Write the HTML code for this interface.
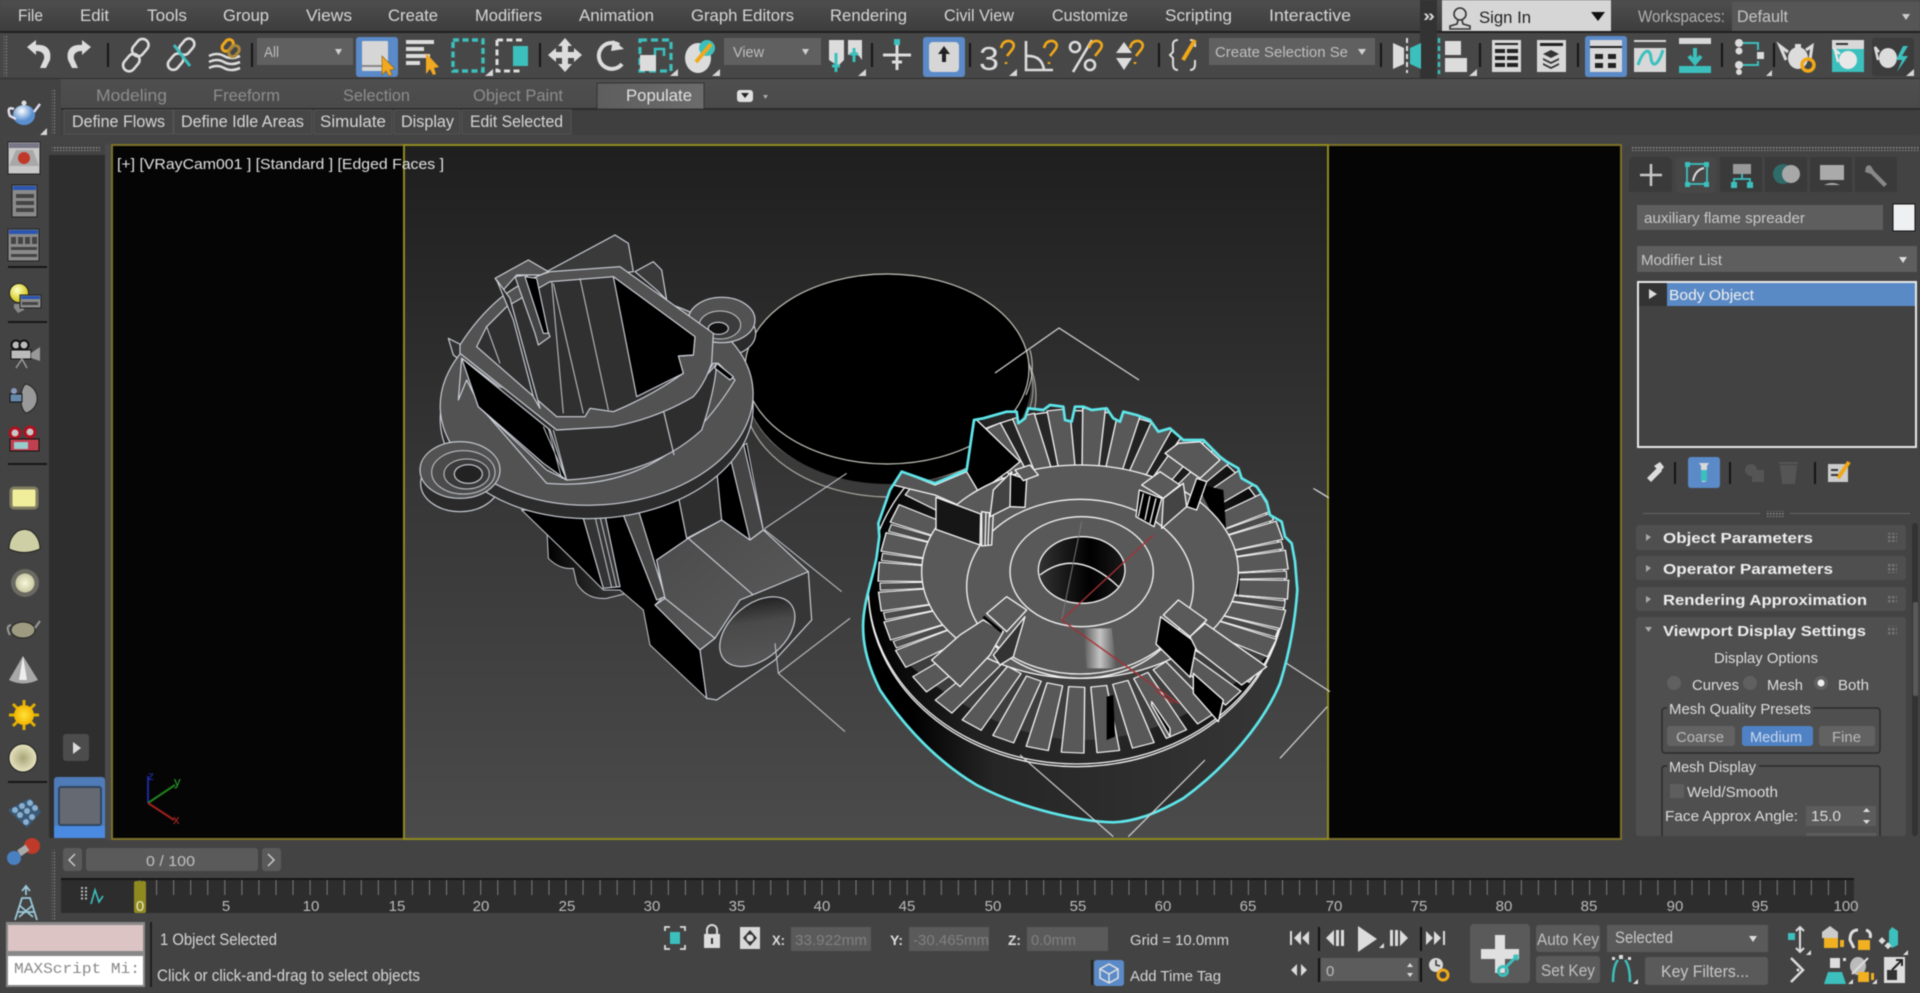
<!DOCTYPE html>
<html><head><meta charset="utf-8"><title>3ds Max</title>
<style>
html,body{margin:0;padding:0;background:#434343;width:1920px;height:993px;overflow:hidden}
svg{display:block;filter:blur(.4px)}
text{font-family:"Liberation Sans",sans-serif;font-size:16.5px;fill:#d6d6d6}
.g{fill:#8d8d8d}
.b{font-weight:bold;fill:#eee;font-size:15px}
.p{font-size:14.5px;fill:#ddd}
.w{fill:#dcdcdc}
.t{fill:#3cc0bd}
.sep{stroke:#151515;stroke-width:2}
.wr{stroke:#cdd1d9;stroke-width:3.4;stroke-linejoin:round}
.wf{stroke:#c4c7cd;stroke-width:3}
.ws{stroke:#f4f4f4;stroke-width:4;stroke-linejoin:round}
.nf{fill:none}
</style></head><body>
<svg width="1920" height="993" viewBox="0 0 1920 993" xmlns="http://www.w3.org/2000/svg">
<defs>
<linearGradient id="vp" x1="0" y1="0" x2="0" y2="1"><stop offset="0" stop-color="#1f1f1f"/><stop offset=".5" stop-color="#373737"/><stop offset="1" stop-color="#4b4b4b"/></linearGradient>
<linearGradient id="mb" x1="0" y1="0" x2="0" y2="1"><stop offset="0" stop-color="#4e4e4e"/><stop offset="1" stop-color="#3d3d3d"/></linearGradient>
<linearGradient id="tb" x1="0" y1="0" x2="0" y2="1"><stop offset="0" stop-color="#4f4f4f"/><stop offset="1" stop-color="#4a4a4a"/></linearGradient>
<linearGradient id="pop" x1="0" y1="0" x2="1" y2="0"><stop offset="0" stop-color="#5e5e5e"/><stop offset="1" stop-color="#6c6c6c"/></linearGradient>
<linearGradient id="base" gradientUnits="userSpaceOnUse" x1="60" y1="0" x2="1300" y2="0"><stop offset="0" stop-color="#000"/><stop offset=".1" stop-color="#000"/><stop offset=".3" stop-color="#262626"/><stop offset="1" stop-color="#363636"/></linearGradient>
<linearGradient id="intr" gradientUnits="userSpaceOnUse" x1="60" y1="0" x2="1300" y2="0"><stop offset="0" stop-color="#000"/><stop offset=".25" stop-color="#202020"/><stop offset=".55" stop-color="#2a2a2a"/><stop offset=".85" stop-color="#141414"/><stop offset="1" stop-color="#000"/></linearGradient>
<linearGradient id="hole" x1="0" y1="0" x2="1" y2="0"><stop offset="0" stop-color="#333"/><stop offset=".6" stop-color="#000"/><stop offset="1" stop-color="#1a1a1a"/></linearGradient>
<linearGradient id="hi" x1="0" y1="0" x2="1" y2="0"><stop offset="0" stop-color="#585858"/><stop offset=".5" stop-color="#c4c4c4"/><stop offset="1" stop-color="#585858"/></linearGradient>
<linearGradient id="bore" x1="0" y1="1" x2="1" y2="0"><stop offset="0" stop-color="#5a5a5a"/><stop offset=".6" stop-color="#4a4a4a"/><stop offset="1" stop-color="#0c0c0c"/></linearGradient>
<linearGradient id="stub" x1="0" y1="0" x2="1" y2="0"><stop offset="0" stop-color="#000"/><stop offset=".5" stop-color="#222"/><stop offset="1" stop-color="#3a3a3a"/></linearGradient>
<linearGradient id="blk" x1="0" y1="0" x2="1" y2="1"><stop offset="0" stop-color="#4a4a4a"/><stop offset="1" stop-color="#5c5c5c"/></linearGradient>
<radialGradient id="sun"><stop offset="0" stop-color="#ffe23a"/><stop offset="1" stop-color="#f2b400"/></radialGradient>
<radialGradient id="bulb" cx=".4" cy=".35"><stop offset="0" stop-color="#ffffc8"/><stop offset="1" stop-color="#d8d030"/></radialGradient>
<radialGradient id="pale"><stop offset="0" stop-color="#f8f8d8"/><stop offset="1" stop-color="#c8c8a4"/></radialGradient>
<radialGradient id="ball2"><stop offset="0" stop-color="#a8a478"/><stop offset="1" stop-color="#e8e4c0"/></radialGradient>
<radialGradient id="tp" cx=".4" cy=".3"><stop offset="0" stop-color="#fff"/><stop offset="1" stop-color="#5a90d0"/></radialGradient>
<pattern id="tick" width="17.06" height="40" patternUnits="userSpaceOnUse" x="139" y="880"><rect x="0" y="0" width="1" height="15" fill="#7c7c7c"/></pattern>
<pattern id="dots" width="3" height="3" patternUnits="userSpaceOnUse"><rect width="1.5" height="1.5" fill="#8c8c8c"/></pattern>
<pattern id="grip" width="4" height="4" patternUnits="userSpaceOnUse"><rect width="2.4" height="2.4" fill="#777"/></pattern>
<polygon id="tooth" points="-24,-380 24,-380 34,-615 -34,-615" fill="#585858" stroke="#f4f4f4" stroke-width="4" stroke-linejoin="round"/>
<polygon id="tooth2" points="-9,-380 9,-380 13,-610 -13,-610" fill="#4a4a4a" stroke="#f4f4f4" stroke-width="3.500" stroke-linejoin="round"/>
<clipPath id="burn"><path d="M155,245 L255,280 350,240 372,90 400,85 470,65 500,65 505,100 525,85 535,55 580,60 600,45 640,50 645,90 665,95 675,50 700,50 725,60 770,55 790,85 810,95 820,65 860,75 900,90 925,125 960,115 1000,150 1060,150 1110,200 1130,215 1165,235 1175,265 1220,290 1250,335 1260,375 1295,395 1305,440 1325,460 1335,515 1342,600 C1335,700 1315,800 1290,880 C1240,1000 1130,1130 1000,1225 C930,1265 860,1295 790,1297 C700,1295 520,1260 380,1185 C270,1120 170,1020 90,900 C60,840 35,770 40,690 C45,620 70,560 80,500 L88,440 85,400 120,300Z"/></clipPath>
</defs>

<!-- base -->
<rect width="1920" height="993" fill="#434343"/>
<!-- menu bar -->
<rect width="1920" height="31" fill="url(#mb)"/>
<rect y="31" width="1920" height="2" fill="#202020"/>
<text x="18" y="21" textLength="25" lengthAdjust="spacingAndGlyphs">File</text>
<text x="80" y="21" textLength="29" lengthAdjust="spacingAndGlyphs">Edit</text>
<text x="147" y="21" textLength="40" lengthAdjust="spacingAndGlyphs">Tools</text>
<text x="223" y="21" textLength="46" lengthAdjust="spacingAndGlyphs">Group</text>
<text x="306" y="21" textLength="46" lengthAdjust="spacingAndGlyphs">Views</text>
<text x="388" y="21" textLength="50" lengthAdjust="spacingAndGlyphs">Create</text>
<text x="475" y="21" textLength="67" lengthAdjust="spacingAndGlyphs">Modifiers</text>
<text x="579" y="21" textLength="75" lengthAdjust="spacingAndGlyphs">Animation</text>
<text x="691" y="21" textLength="103" lengthAdjust="spacingAndGlyphs">Graph Editors</text>
<text x="830" y="21" textLength="77" lengthAdjust="spacingAndGlyphs">Rendering</text>
<text x="944" y="21" textLength="70" lengthAdjust="spacingAndGlyphs">Civil View</text>
<text x="1052" y="21" textLength="76" lengthAdjust="spacingAndGlyphs">Customize</text>
<text x="1165" y="21" textLength="67" lengthAdjust="spacingAndGlyphs">Scripting</text>
<text x="1269" y="21" textLength="82" lengthAdjust="spacingAndGlyphs">Interactive</text>
<rect x="1420" y="0" width="17" height="78" fill="#333"/>
<text x="1423" y="21" style="font-weight:bold" textLength="12" lengthAdjust="spacingAndGlyphs">»</text>
<rect x="1442" y="0" width="169" height="31" fill="#d6d6d6"/>
<circle cx="1460" cy="14" r="6" fill="none" stroke="#333" stroke-width="1.6"/><path d="M1458,20 L1457,24 1450,26 1450,29 1470,29 1470,26 1463,24 1462,20" fill="none" stroke="#333" stroke-width="1.6"/>
<text x="1479" y="23" textLength="52" lengthAdjust="spacingAndGlyphs" style="fill:#222">Sign In</text>
<path d="M1591,12 L1605,12 1598,21Z" fill="#111"/>
<text x="1638" y="22" textLength="87" lengthAdjust="spacingAndGlyphs" style="fill:#b0b0b0">Workspaces:</text>
<rect x="1732" y="2" width="188" height="29" fill="#565656"/>
<text x="1737" y="22" textLength="51" lengthAdjust="spacingAndGlyphs" style="fill:#c4c4c4">Default</text>
<path d="M1902,14 L1910,14 1906,20Z" fill="#ccc"/>

<!-- main toolbar -->
<rect y="33" width="1420" height="45" fill="#474747"/><rect x="1437" y="33" width="483" height="45" fill="#474747"/>
<rect y="78" width="1920" height="1" fill="#2e2e2e"/>
<rect x="4" y="36" width="3" height="40" fill="url(#dots)"/>
<!-- undo/redo -->
<path d="M27,47 L36,40 36,45 C47,44 52,50 50,60 L46,68 40,68 44,59 C45,54 42,51 36,51 L36,55Z" class="w"/>
<path d="M91,47 L82,40 82,45 C71,44 66,50 68,60 L72,68 78,68 74,59 C73,54 76,51 82,51 L82,55Z" class="w"/>
<line x1="108" y1="43" x2="108" y2="67" class="sep"/>
<!-- link -->
<g fill="none" stroke="#dcdcdc" stroke-width="2.600"><rect x="125" y="53" width="12" height="19" rx="6" transform="rotate(40 131 63)"/><rect x="134" y="38" width="12" height="19" rx="6" transform="rotate(40 140 48)"/>
<rect x="170" y="53" width="11" height="18" rx="5.500" transform="rotate(40 176 62)"/><rect x="181" y="38" width="11" height="18" rx="5.500" transform="rotate(40 187 47)"/></g>
<path d="M174,45 L190,66" stroke="#3cc0bd" stroke-width="3"/>
<!-- bind -->
<g fill="none" stroke="#dcdcdc" stroke-width="2.600"><path d="M209,56 Q217,52 224,56 T240,56"/><path d="M209,62 Q217,58 224,62 T240,62"/><path d="M209,68 Q217,64 224,68 T240,68"/></g>
<g fill="none" stroke="#f0a818" stroke-width="3"><rect x="224" y="39" width="8" height="13" rx="4" transform="rotate(40 228 45)"/><rect x="230" y="45" width="8" height="12" rx="4" transform="rotate(40 234 51)" stroke="#aa8838"/></g>
<line x1="252" y1="43" x2="252" y2="67" class="sep"/>
<!-- selection filter -->
<rect x="257" y="38" width="96" height="27" fill="#606060"/>
<text x="264" y="57" textLength="15" lengthAdjust="spacingAndGlyphs" style="fill:#bfbfbf;font-size:15px">All</text>
<path d="M335,49 L342,49 338.500,55Z" fill="#d0d0d0"/>
<rect x="356" y="37" width="42" height="40" rx="3" fill="#5a8ac8"/>
<rect x="362" y="41" width="26" height="30" rx="1" fill="#d6d6d6"/><rect x="362" y="65" width="26" height="2" fill="#888"/>
<path d="M382,56 L382,75 386,71 389,76 392,75 390,70 395,69Z" fill="#f2a820" stroke="#8a5a10" stroke-width=".6"/>
<!-- by name -->
<g class="w"><rect x="406" y="40" width="28" height="4"/><rect x="406" y="47" width="18" height="4"/><rect x="406" y="54" width="24" height="4"/><rect x="406" y="61" width="14" height="4"/></g>
<path d="M426,53 L426,74 430,69 433,75 436,74 434,68 439,67Z" fill="#f2a820"/>
<!-- region -->
<rect x="453" y="40" width="30" height="31" fill="none" stroke="#3cc0bd" stroke-width="3.400" stroke-dasharray="6 3.500"/>
<path d="M485,76 L493,76 493,69Z" fill="#d8d8d8"/>
<path d="M497,40 L522,40 M497,40 L497,71 522,71" fill="none" stroke="#dcdcdc" stroke-width="3" stroke-dasharray="6 3.500"/>
<rect x="513" y="46" width="15" height="20" class="t"/>
<line x1="540" y1="43" x2="540" y2="67" class="sep"/>
<!-- move -->
<path d="M565,38 L572,46 568,46 568,52 574,52 574,48 582,55 574,62 574,58 568,58 568,64 572,64 565,72 558,64 562,64 562,58 556,58 556,62 548,55 556,48 556,52 562,52 562,46 558,46Z" class="w"/>
<!-- rotate -->
<path d="M619,45 A13,13 0 1 0 622,64" fill="none" stroke="#dcdcdc" stroke-width="4"/><path d="M613,40 L624,49 611,51Z" class="w"/>
<!-- scale -->
<rect x="640" y="40" width="31" height="31" fill="none" stroke="#3cc0bd" stroke-width="3.200" stroke-dasharray="7 4"/>
<rect x="640" y="55" width="16" height="16" class="w"/><path d="M655,55 L655,49 664,49 664,56" fill="none" stroke="#3cc0bd" stroke-width="2.500"/>
<!-- placement -->
<ellipse cx="698" cy="58" rx="13" ry="15" class="w"/><circle cx="707" cy="48" r="8" class="t"/><path d="M696,62 L711,44" stroke="#f0a818" stroke-width="4"/>
<path d="M670,76 L678,76 678,69Z M712,76 L720,76 720,69Z" fill="#d8d8d8"/>
<!-- view -->
<rect x="724" y="38" width="97" height="27" fill="#606060"/>
<text x="733" y="57" textLength="31" lengthAdjust="spacingAndGlyphs" style="fill:#bfbfbf;font-size:15px">View</text>
<path d="M802,49 L809,49 805.500,55Z" fill="#d0d0d0"/>
<!-- pivot -->
<path d="M829,40 L844,40 844,60 838,66 829,60Z M848,40 L862,40 862,60 856,52 848,55Z" class="w"/>
<path d="M836,53 L836,72 M832,66 L840,66 M854,48 L854,62 M850,54 L858,54" stroke="#3cc0bd" stroke-width="3"/>
<path d="M858,76 L866,76 866,69Z" fill="#d8d8d8"/>
<line x1="872" y1="43" x2="872" y2="67" class="sep"/>
<!-- manipulate -->
<path d="M897,40 L897,70 M883,55 L911,55 M892,62 L902,62" stroke="#dcdcdc" stroke-width="3"/><rect x="894" y="39" width="6" height="6" class="t"/>
<rect x="923" y="37" width="42" height="40" rx="3" fill="#5a8ac8"/>
<rect x="929" y="42" width="30" height="30" rx="4" fill="#d6d6d6"/><path d="M944,46 L950,54 946,54 946,62 942,62 942,54 938,54Z" fill="#222"/>
<line x1="970" y1="43" x2="970" y2="67" class="sep"/>
<!-- snaps -->
<text x="979" y="70" style="font-size:33px;fill:#dcdcdc" textLength="20" lengthAdjust="spacingAndGlyphs">3</text>
<path d="M1001,48 Q1003,40 1010,41 Q1017,44 1011,51 L1007,56 M1006,62 L1006,64" fill="none" stroke="#f0a818" stroke-width="2.600"/>
<path d="M1009,76 L1017,76 1017,69Z" fill="#d8d8d8"/>
<path d="M1026,41 L1026,70 1053,70 M1026,70 L1026,56 Q1042,55 1044,70" fill="none" stroke="#dcdcdc" stroke-width="2.600"/>
<path d="M1044,48 Q1046,40 1053,41 Q1060,44 1054,51 L1050,56 M1049,62 L1049,64" fill="none" stroke="#f0a818" stroke-width="2.600"/>
<circle cx="1075" cy="47" r="5" fill="none" stroke="#dcdcdc" stroke-width="2.600"/><circle cx="1090" cy="65" r="5" fill="none" stroke="#dcdcdc" stroke-width="2.600"/><path d="M1073,72 L1092,40" stroke="#dcdcdc" stroke-width="2.600"/>
<path d="M1089,48 Q1091,40 1098,41 Q1105,44 1099,51 L1095,56" fill="none" stroke="#f0a818" stroke-width="2.600"/>
<path d="M1116,53 L1124,42 1132,53Z M1116,58 L1132,58 1124,70Z" class="w"/>
<path d="M1130,48 Q1132,40 1139,41 Q1146,44 1140,51 L1136,56 M1135,62 L1135,64" fill="none" stroke="#f0a818" stroke-width="2.600"/>
<line x1="1159" y1="43" x2="1159" y2="67" class="sep"/>
<path d="M1178,40 Q1172,40 1173,47 L1173,52 1170,55 1173,58 1173,64 Q1173,70 1178,70 M1190,40 Q1196,40 1195,47 M1195,60 L1195,64 Q1195,70 1190,70" fill="none" stroke="#dcdcdc" stroke-width="2"/>
<path d="M1183,60 L1195,40" stroke="#f0a818" stroke-width="4"/>
<rect x="1209" y="38" width="166" height="27" fill="#606060"/>
<text x="1215" y="57" textLength="133" lengthAdjust="spacingAndGlyphs" style="fill:#bfbfbf;font-size:15px">Create Selection Se</text>
<path d="M1358,49 L1366,49 1362,55Z" fill="#d0d0d0"/>
<line x1="1381" y1="43" x2="1381" y2="67" class="sep"/>
<!-- mirror -->
<path d="M1393,43 L1404,48 1404,64 1393,69Z" class="w"/><path d="M1421,43 L1410,48 1410,64 1421,69Z" class="t"/><line x1="1407" y1="38" x2="1407" y2="73" stroke="#ddd" stroke-width="2" stroke-dasharray="5 3"/>
<!-- align -->
<line x1="1439" y1="38" x2="1439" y2="74" stroke="#3cc0bd" stroke-width="2.500" stroke-dasharray="5 3"/><rect x="1445" y="41" width="16" height="14" class="w"/><rect x="1445" y="58" width="22" height="14" class="w"/>
<path d="M1469,76 L1477,76 1477,69Z" fill="#d8d8d8"/>
<line x1="1480" y1="43" x2="1480" y2="67" class="sep"/>
<!-- layers -->
<rect x="1492" y="40" width="29" height="32" fill="#d8d8d8"/><g fill="#222"><rect x="1495" y="43" width="23" height="2"/><rect x="1495" y="49" width="10" height="4"/><rect x="1507" y="49" width="11" height="4"/><rect x="1495" y="56" width="10" height="4"/><rect x="1507" y="56" width="11" height="4"/><rect x="1495" y="63" width="10" height="4"/><rect x="1507" y="63" width="11" height="4"/></g>
<rect x="1537" y="40" width="29" height="32" fill="#d8d8d8"/><rect x="1540" y="43" width="23" height="3" fill="#222"/><path d="M1551,50 L1559,54 1551,58 1543,54Z M1543,58 L1551,62 1559,58 1559,60 1551,64 1543,60Z M1543,63 L1551,67 1559,63 1559,65 1551,69 1543,65Z" fill="#333"/>
<line x1="1578" y1="43" x2="1578" y2="67" class="sep"/>
<!-- curve buttons -->
<rect x="1585" y="36" width="42" height="41" rx="3" fill="#5a8ac8"/>
<rect x="1590" y="40" width="32" height="32" fill="#d8d8d8"/><rect x="1590" y="46" width="32" height="2" fill="#222"/><rect x="1595" y="54" width="8" height="5" fill="#222"/><rect x="1608" y="54" width="8" height="5" fill="#222"/><rect x="1595" y="63" width="8" height="5" fill="#222"/><rect x="1608" y="63" width="8" height="5" fill="#222"/>
<rect x="1634" y="40" width="32" height="32" fill="#d8d8d8"/><rect x="1634" y="40" width="32" height="8" fill="#4a4a4a"/><rect x="1634" y="40" width="32" height="2" fill="#d8d8d8"/><path d="M1638,65 C1644,48 1650,48 1651,58 C1652,68 1658,66 1663,50" fill="none" stroke="#3cc0bd" stroke-width="3"/>
<rect x="1679" y="38" width="32" height="6" fill="#d8d8d8"/><rect x="1679" y="66" width="32" height="7" class="t"/><path d="M1695,48 L1695,62 M1689,56 L1695,63 1701,56" fill="none" stroke="#3cc0bd" stroke-width="4"/>
<line x1="1722" y1="43" x2="1722" y2="67" class="sep"/>
<g fill="#dcdcdc"><circle cx="1739" cy="43" r="4"/><circle cx="1739" cy="51" r="3.500"/><circle cx="1739" cy="65" r="4"/><circle cx="1739" cy="72" r="3"/><rect x="1757" y="52" width="7" height="7"/></g>
<path d="M1743,43 L1758,43 1758,50 M1743,65 L1758,65 1758,61" fill="none" stroke="#3cc0bd" stroke-width="2"/>
<path d="M1766,76 L1772,76 1772,70Z" fill="#d8d8d8"/>
<line x1="1774" y1="43" x2="1774" y2="67" class="sep"/>
<!-- render -->
<ellipse cx="1798" cy="58" rx="10" ry="11" fill="#dcdcdc"/><path d="M1788,52 L1780,46 1786,60 M1806,50 L1812,46 1810,60" fill="none" stroke="#dcdcdc" stroke-width="3"/><rect x="1795" y="44" width="6" height="4" fill="#dcdcdc"/><circle cx="1808" cy="65" r="6" fill="none" stroke="#f0a818" stroke-width="3.500"/>
<rect x="1832" y="40" width="32" height="32" class="t"/><rect x="1832" y="40" width="32" height="9" fill="#d8d8d8"/><rect x="1836" y="43" width="12" height="2" fill="#333"/><ellipse cx="1848" cy="60" rx="9" ry="9" fill="#e8e8e8"/><path d="M1840,54 L1835,50 1838,62" fill="none" stroke="#e8e8e8" stroke-width="2.500"/>
<rect x="1872" y="38" width="42" height="38" rx="3" fill="#3c3c3c"/><ellipse cx="1888" cy="58" rx="9" ry="10" fill="#dcdcdc"/><path d="M1879,52 L1875,47 1878,60" fill="none" stroke="#dcdcdc" stroke-width="2.500"/><path d="M1903,46 L1896,60 1902,60 1897,72 1908,56 1902,56 1908,46Z" class="t"/>
<path d="M1906,76 L1914,76 1914,69Z" fill="#d8d8d8"/>

<!-- ribbon -->
<rect x="0" y="79" width="61" height="56" fill="#434343"/>
<rect x="61" y="79" width="1859" height="29" fill="url(#tb)"/>
<rect x="61" y="108" width="1859" height="2" fill="#2c2c2c"/>
<rect x="61" y="110" width="1859" height="25" fill="#3f3f3f"/>
<rect y="135" width="1920" height="9" fill="#444"/>
<rect x="52" y="90" width="3" height="44" fill="url(#dots)"/>
<rect x="597" y="83" width="107" height="26" fill="url(#pop)" stroke="#333"/>
<text class="g" x="96" y="101" textLength="71" lengthAdjust="spacingAndGlyphs">Modeling</text>
<text class="g" x="213" y="101" textLength="67" lengthAdjust="spacingAndGlyphs">Freeform</text>
<text class="g" x="343" y="101" textLength="67" lengthAdjust="spacingAndGlyphs">Selection</text>
<text class="g" x="473" y="101" textLength="90" lengthAdjust="spacingAndGlyphs">Object Paint</text>
<text x="626" y="101" textLength="66" lengthAdjust="spacingAndGlyphs" style="fill:#e0e0e0">Populate</text>
<rect x="737" y="90" width="16" height="12" rx="3" fill="#e0e0e0"/><path d="M741,93 L749,93 745,98Z" fill="#222"/><path d="M763,95 L768,95 765.500,99Z" fill="#aaa"/>
<g fill="#464646" stroke="#535353"><rect x="64" y="110" width="109" height="24"/><rect x="174" y="110" width="138" height="24"/><rect x="314" y="110" width="78" height="24"/><rect x="394" y="110" width="66" height="24"/><rect x="462" y="110" width="109" height="24"/></g>
<text x="72" y="127" textLength="93" lengthAdjust="spacingAndGlyphs">Define Flows</text>
<text x="181" y="127" textLength="123" lengthAdjust="spacingAndGlyphs">Define Idle Areas</text>
<text x="320" y="127" textLength="66" lengthAdjust="spacingAndGlyphs">Simulate</text>
<text x="401" y="127" textLength="53" lengthAdjust="spacingAndGlyphs">Display</text>
<text x="470" y="127" textLength="93" lengthAdjust="spacingAndGlyphs">Edit Selected</text>

<!-- left strip -->
<rect x="49" y="155" width="56" height="683" fill="#2e2e2e"/>
<rect x="52" y="146" width="48" height="5" fill="url(#dots)"/>
<rect x="105" y="144" width="6" height="696" fill="#4a4a4a"/>
<!-- strip icons -->
<ellipse cx="24" cy="115" rx="11" ry="10" fill="url(#tp)"/><path d="M14,109 Q6,106 10,116 L16,119 M34,112 L40,104" fill="none" stroke="#dde" stroke-width="2.500"/><circle cx="24" cy="103" r="2.500" fill="#ddd"/>
<path d="M40,135 L47,135 47,128Z" fill="#d8d8d8"/>
<rect x="8" y="142" width="32" height="32" fill="#c8c8c8" stroke="#222"/><rect x="9" y="143" width="30" height="5" fill="#778"/><path d="M9,166 L16,150 33,150 39,166Z" fill="#a8a8a8"/><circle cx="24" cy="158" r="6" fill="#c03828"/>
<rect x="12" y="185" width="25" height="32" fill="#8a8a8a" stroke="#222"/><rect x="13" y="186" width="23" height="4" fill="#2a56b0"/><g fill="#444"><rect x="16" y="194" width="18" height="4"/><rect x="16" y="201" width="18" height="4"/><rect x="16" y="208" width="18" height="4"/></g>
<rect x="8" y="229" width="31" height="32" fill="#8a8a8a" stroke="#222"/><rect x="9" y="230" width="29" height="4" fill="#2a56b0"/><g fill="#444"><rect x="11" y="237" width="5" height="7"/><rect x="18" y="237" width="5" height="7"/><rect x="25" y="237" width="5" height="7"/><rect x="32" y="237" width="5" height="7"/><rect x="11" y="247" width="26" height="3"/><rect x="11" y="254" width="26" height="3"/></g>
<rect x="8" y="266" width="39" height="2" fill="#161616"/>
<circle cx="19" cy="293" r="9.500" fill="url(#bulb)" stroke="#222"/><path d="M14,304 L24,304 24,310 18,313 14,308Z" fill="#888"/><rect x="20" y="295" width="21" height="13" fill="#8a8a8a" stroke="#222"/><rect x="21" y="296" width="19" height="3" fill="#2a56b0"/><rect x="22" y="302" width="16" height="3" fill="#444"/>
<rect x="8" y="321" width="39" height="2" fill="#161616"/>
<circle cx="16" cy="345" r="4.500" fill="#bbb" stroke="#111" stroke-width="2"/><circle cx="24" cy="345" r="4.500" fill="#bbb" stroke="#111" stroke-width="2"/><rect x="11" y="350" width="20" height="9" fill="#bbb" stroke="#111"/><path d="M31,353 L40,347 40,361 31,358Z" fill="#999"/><path d="M16,368 L22,359 27,368" fill="none" stroke="#999" stroke-width="1.500"/>
<path d="M26,384 A15,15 0 0 1 26,413 A7,15 0 0 1 26,384Z" fill="#999" stroke="#222"/><rect x="10" y="394" width="12" height="8" fill="#68a" stroke="#111"/><circle cx="14" cy="391" r="3" fill="#89b"/>
<circle cx="15" cy="433" r="5" fill="#c8c8c8" stroke="#b01020" stroke-width="3"/><circle cx="30" cy="432" r="5" fill="#c8c8c8" stroke="#b01020" stroke-width="3"/><rect x="10" y="439" width="29" height="12" fill="#c04050" stroke="#111"/><rect x="14" y="442" width="14" height="7" fill="#9cc"/>
<rect x="8" y="463" width="39" height="2" fill="#161616"/>
<rect x="11" y="488" width="26" height="20" rx="3" fill="#f0ee9a" stroke="#807f62" stroke-width="3"/>
<path d="M9,549 A15,19 0 0 1 40,549 Q24,556 9,549Z" fill="#cfcfa6" stroke="#222"/>
<circle cx="25" cy="583" r="14" fill="#6a6a62"/><circle cx="25" cy="583" r="9.500" fill="url(#pale)"/>
<ellipse cx="23" cy="630" rx="12" ry="8" fill="#9d9a80" stroke="#222"/><path d="M11,625 Q5,626 10,635 M35,628 L40,621" fill="none" stroke="#999" stroke-width="2"/>
<path d="M23,656 L38,680 Q23,687 9,680Z" fill="#a8a8a8"/><path d="M23,656 L27,680 19,680Z" fill="#eee"/>
<g stroke="#e0b000" stroke-width="3"><path d="M24,700 L24,730 M9,715 L39,715 M13,704 L35,726 M35,704 L13,726"/></g><circle cx="24" cy="715" r="10" fill="url(#sun)"/>
<circle cx="23" cy="758" r="14" fill="url(#ball2)" stroke="#222"/>
<rect x="8" y="781" width="39" height="2" fill="#161616"/>
<path d="M8,810 L30,798 41,812 27,828Z" fill="#3a5a78"/><g fill="#8ab0d0"><circle cx="15" cy="810" r="3"/><circle cx="22" cy="806" r="3"/><circle cx="30" cy="803" r="3"/><circle cx="20" cy="815" r="3"/><circle cx="27" cy="811" r="3"/><circle cx="35" cy="808" r="3"/><circle cx="26" cy="822" r="3"/><circle cx="32" cy="817" r="3"/></g>
<circle cx="14" cy="858" r="7" fill="#4a80c0"/><circle cx="32" cy="846" r="8" fill="#c03a2a"/><rect x="18" y="847" width="10" height="7" fill="#aaa" transform="rotate(-35 23 850)"/>
<path d="M26,887 L26,895 M22,891 L26,886 30,891 M15,920 L22,898 30,898 37,920 M17,912 L35,912 M19,905 L33,917 M33,905 L19,917" fill="none" stroke="#9cc8d8" stroke-width="1.800"/>
<!-- side panel btns -->
<rect x="63" y="734" width="26" height="27" rx="3" fill="#4c4c4c"/><path d="M73,742 L81,748 73,754Z" fill="#ddd"/>
<rect x="54" y="777" width="51" height="61" rx="3" fill="#4f7cb8"/><rect x="54" y="826" width="51" height="12" fill="#4a8ae0"/><rect x="59" y="787" width="42" height="38" rx="2" fill="#656a72" stroke="#30465e" stroke-width="2"/>

<!-- viewport -->
<rect x="111" y="144" width="1511" height="696" fill="#050505"/>
<rect x="404" y="146" width="924" height="692" fill="url(#vp)"/>
<rect x="112" y="145" width="1509" height="694" fill="none" stroke="#7c7028" stroke-width="2"/>
<rect x="404" y="145" width="924" height="694" fill="none" stroke="#8f8a20" stroke-width="2"/>
<text x="117" y="169" textLength="327" lengthAdjust="spacingAndGlyphs" style="font-size:15px;fill:#e0e0e0">[+] [VRayCam001 ] [Standard ] [Edged Faces ]</text>

<!-- tripod -->
<g stroke-width="2" fill="none"><path d="M148,803 L148,776" stroke="#1a2a9a"/><path d="M148,803 L175,785" stroke="#208020"/><path d="M148,803 L174,820" stroke="#a02020"/></g>
<text x="148" y="780" style="font-size:12px;fill:#2030b0">z</text><text x="174" y="786" style="font-size:13px;fill:#30a030">y</text><text x="173" y="824" style="font-size:13px;fill:#b02828">x</text>

<!-- lid -->
<ellipse cx="890" cy="395" rx="146" ry="102" fill="#3a3a3a" stroke="#a8a8a0" stroke-width="1.200"/>
<ellipse cx="890" cy="388" rx="143" ry="95" fill="none" stroke="#a8a8a0" stroke-width="1"/>
<ellipse cx="888" cy="382" rx="143" ry="102" fill="#000"/>
<ellipse cx="887" cy="369" rx="142" ry="95" fill="#000" stroke="#c4c4bc" stroke-width="1.200"/>
<path d="M1030,350 Q1036,372 1026,395" fill="none" stroke="#ccc" stroke-width="1"/>
<g fill="none" stroke="#d4d4d4" stroke-width="1.200">
<path d="M995,373 L1059,328 1139,380"/><path d="M1316,490 L1329,498"/>
</g>

<!-- left object, coordinates from 3x crop -->
<g transform="translate(400 230) scale(.33333)">
<path d="M440,880 L445,985 Q480,1020 520,1015 L530,1060 Q560,1110 620,1105 L680,1090 L640,880Z" fill="url(#stub)" class="wf"/>
<path d="M365,840 L520,990 610,1080 660,1080 730,1140 750,1245 920,1405 900,1260 765,1125 790,1100 770,990 865,925 965,870 1050,930 1090,900 1040,640 880,740 670,850Z" fill="#000" class="wf"/>
<path d="M550,865 L610,1075 660,1070 615,855Z" fill="#333" class="wr"/>
<path d="M585,860 L635,1072 M600,860 L650,1072" class="wf nf"/>
<path d="M670,855 L770,1110 795,1100 715,840Z" fill="#474747" class="wr"/>
<path d="M835,800 L860,925 965,870 950,720 880,740Z" fill="#2e2e2e" class="wr"/>
<path d="M990,680 L1050,930 1090,900 1030,640Z" fill="#444" class="wr"/>
<path d="M1095,895 L1100,1010" class="wf nf"/>
<!-- block -->
<path d="M770,990 L865,925 965,870 1050,930 1090,900 1225,1025 1175,1060 1130,1075 1060,1100 945,1225 900,1260 765,1125 795,1105Z" fill="url(#blk)" class="wr"/>
<path d="M865,925 L1060,1095 M765,1125 L795,1105 945,1225" class="wr nf"/>
<path d="M900,1260 L945,1225 1020,1110 1130,1065 1225,1025 1235,1170 1125,1290 950,1410 920,1405Z" fill="#363636" class="wr"/>
<ellipse cx="1072" cy="1205" rx="130" ry="82" transform="rotate(-40 1072 1205)" fill="url(#bore)" class="wr"/>
<path d="M1125,1240 L1135,1330 1335,1505 M1135,1330 L1350,1165 M1095,900 L1325,1085 M1095,895 L1340,730" class="wf nf"/>
<!-- back fins -->
<path d="M440,125 L645,15 685,40 700,125 500,150Z" fill="#3a3a3a" class="wr"/>
<path d="M705,125 L760,95 785,120 800,210 770,180Z" fill="#3a3a3a" class="wr"/>
<path d="M145,325 L185,345 180,390 160,375Z" fill="#333" class="wr"/>
<!-- lobes lower -->
<ellipse cx="180" cy="760" rx="118" ry="85" fill="#2a2a2a" class="wr"/>
<ellipse cx="965" cy="310" rx="102" ry="70" fill="#2a2a2a" class="wr"/>
<ellipse cx="590" cy="550" rx="470" ry="315" transform="rotate(-4 590 550)" fill="#2c2c2c" class="wr"/>
<ellipse cx="590" cy="510" rx="470" ry="315" transform="rotate(-4 590 510)" fill="#525252" class="wr"/>
<ellipse cx="180" cy="720" rx="120" ry="85" fill="#525252" class="wr"/>
<ellipse cx="190" cy="727" rx="95" ry="65" fill="#4a4a4a" class="wf"/>
<ellipse cx="200" cy="732" rx="68" ry="45" fill="#3a3a3a" class="wf"/>
<ellipse cx="205" cy="732" rx="42" ry="28" fill="#222" class="wr"/>
<ellipse cx="965" cy="270" rx="100" ry="68" fill="#525252" class="wr"/>
<ellipse cx="960" cy="285" rx="62" ry="42" fill="#3c3c3c" class="wf"/>
<ellipse cx="955" cy="295" rx="30" ry="18" fill="#111" class="wr"/>
<!-- flange inner -->
<path d="M175,510 L200,450 240,530 440,760 Q800,790 1005,450 L955,400 940,400 880,500 640,590 470,600 185,385Z" fill="#505050" class="wr"/>
<path d="M205,440 L235,530 440,720 500,750 Q760,735 905,600 945,480 950,400 880,500 640,590 470,600Z" fill="#2e2e2e" class="wr"/>
<path d="M185,385 L235,530 430,700 500,750 450,600Z" fill="#000" class="wr"/>
<path d="M430,590 L500,750 M445,595 L485,745 M460,600 L500,750" class="wf nf"/>
<path d="M790,540 L822,675" class="wr nf"/>
<path d="M950,400 L1000,440 990,450 945,415Z" fill="#000" class="wr"/>
<!-- cup rim -->
<path d="M180,345 Q230,265 300,205 Q370,150 450,125 L660,110 940,310 935,400 Q915,460 880,500 Q770,565 640,590 L470,600 180,370Z" fill="#525252" class="wr"/>
<path d="M230,350 L260,290 320,230 450,155 640,140 885,320 880,375 835,378 850,430 Q750,500 640,545 L570,535 555,560 470,560Z" fill="#303030" class="wr"/>
<path d="M640,140 L885,320 880,375 835,378 850,430 710,500Z" fill="#000" class="wr"/>
<path d="M455,155 L490,550 M540,145 L625,540 M260,290 L300,400" class="wf nf"/>
<path d="M460,160 L550,550" class="wf nf"/>
<!-- front tab -->
<path d="M285,145 L385,90 445,125 420,135 350,135 310,180Z" fill="#525252" class="wr"/>
<path d="M290,150 L340,270 400,500 420,535 330,205Z" fill="#2a2a2a" class="wr"/>
<path d="M345,140 L380,135 450,320 415,345 405,310Z" fill="#444" class="wr"/>
<path d="M375,140 L410,145 445,310 430,310Z" fill="#000" class="wr"/>
</g>

<!-- burner, coordinates from 3x crop -->
<g transform="translate(850 390) scale(.33333)">
<g clip-path="url(#burn)">
<rect x="0" y="0" width="1440" height="1350" fill="url(#base)"/>
<ellipse cx="680" cy="600" rx="625" ry="530" fill="none" stroke="#f0f0f0" stroke-width="4"/>
<ellipse cx="680" cy="592" rx="625" ry="530" fill="url(#intr)" stroke="#f0f0f0" stroke-width="4"/>
<path d="M150,800 Q700,1300 1250,800 L1100,700 L300,700Z" fill="#3e3e3e"/>
<g transform="translate(700 572) scale(1 .84)">
<use href="#tooth" transform="rotate(3)"/><use href="#tooth" transform="rotate(13)"/><use href="#tooth" transform="rotate(23)"/><use href="#tooth" transform="rotate(33)"/><use href="#tooth" transform="rotate(43)"/><use href="#tooth" transform="rotate(53)"/><use href="#tooth" transform="rotate(63)"/><use href="#tooth" transform="rotate(73)"/><use href="#tooth" transform="rotate(83)"/><use href="#tooth" transform="rotate(93)"/><use href="#tooth" transform="rotate(103)"/><use href="#tooth" transform="rotate(113)"/><use href="#tooth" transform="rotate(123)"/><use href="#tooth" transform="rotate(133)"/><use href="#tooth" transform="rotate(143)"/><use href="#tooth" transform="rotate(153)"/><use href="#tooth" transform="rotate(163)"/><use href="#tooth" transform="rotate(173)"/><use href="#tooth" transform="rotate(183)"/><use href="#tooth" transform="rotate(193)"/><use href="#tooth" transform="rotate(203)"/><use href="#tooth" transform="rotate(213)"/><use href="#tooth" transform="rotate(223)"/><use href="#tooth" transform="rotate(233)"/><use href="#tooth" transform="rotate(243)"/><use href="#tooth" transform="rotate(253)"/><use href="#tooth" transform="rotate(263)"/><use href="#tooth" transform="rotate(273)"/><use href="#tooth" transform="rotate(283)"/><use href="#tooth" transform="rotate(293)"/><use href="#tooth" transform="rotate(303)"/><use href="#tooth" transform="rotate(313)"/><use href="#tooth" transform="rotate(323)"/><use href="#tooth" transform="rotate(333)"/><use href="#tooth" transform="rotate(343)"/><use href="#tooth" transform="rotate(353)"/>
<use href="#tooth2" transform="rotate(248)"/><use href="#tooth2" transform="rotate(258)"/><use href="#tooth2" transform="rotate(268)"/><use href="#tooth2" transform="rotate(278)"/><use href="#tooth2" transform="rotate(288)"/><use href="#tooth2" transform="rotate(68)"/><use href="#tooth2" transform="rotate(78)"/><use href="#tooth2" transform="rotate(88)"/><use href="#tooth2" transform="rotate(98)"/><use href="#tooth2" transform="rotate(108)"/>
</g>
<!-- black slab top-left & plates -->
<path d="M375,85 L510,215 480,240 370,320 270,285 350,240Z" fill="#000" class="ws"/>
<path d="M155,245 L255,285 350,245 400,330 370,365 255,315 130,285Z" fill="#555" class="ws"/>
<path d="M985,160 L1050,155 1110,210 1050,265 1000,230 945,190Z" fill="#585858" class="ws"/>
<path d="M1040,280 L1120,300 1130,440 1170,560 1165,620 1100,400Z" fill="#000"/>
</g>
<!-- centre -->
<ellipse cx="690" cy="545" rx="475" ry="320" fill="#595959" class="ws"/>
<ellipse cx="690" cy="597" rx="330" ry="268" fill="none" class="ws"/>
<ellipse cx="690" cy="590" rx="340" ry="262" fill="#595959" class="ws"/>
<path d="M700,715 L785,715 800,835 710,835Z" fill="url(#hi)"/>
<ellipse cx="695" cy="545" rx="215" ry="165" fill="#595959" class="ws"/>
<ellipse cx="695" cy="540" rx="130" ry="100" fill="url(#hole)" class="ws"/>
<path d="M570,555 Q680,470 805,590" class="ws nf"/>
<!-- dark windows and gates -->
<path d="M258,322 L392,372 390,465 258,418Z" fill="#161616" class="ws"/>
<path d="M395,365 L430,370 425,465 395,468Z" fill="#555" class="ws"/>
<path d="M408,368 L405,466 M418,369 L414,466" class="ws nf"/>
<path d="M430,300 L485,245 480,350 420,380Z" fill="#444" class="ws"/>
<path d="M482,252 L530,268 525,352 480,350Z" fill="#0c0c0c" class="ws"/>
<path d="M495,240 L540,225 565,255 520,272Z" fill="#5a5a5a" class="ws"/>
<path d="M868,300 L935,325 912,410 858,380Z" fill="#000" class="ws"/>
<path d="M880,310 L865,380 M900,318 L885,390 M918,325 L900,400" class="ws nf"/>
<path d="M940,325 L1000,280 1010,350 935,415Z" fill="#444" class="ws"/>
<path d="M875,285 L930,245 990,285 940,325Z" fill="#5a5a5a" class="ws"/>
<path d="M1010,350 L1040,265 1070,275 1040,360Z" fill="#000" class="ws"/>
<path d="M932,680 L1040,760 1020,862 918,762Z" fill="#000" class="ws"/>
<path d="M940,675 L985,630 1070,690 1020,740Z" fill="#5a5a5a" class="ws"/>
<path d="M1020,740 L1065,700 1250,830 1175,885 1040,780Z" fill="#555" class="ws"/>
<path d="M1030,850 L1120,930 1105,995 1030,910Z" fill="#000" class="ws"/>
<path d="M905,935 L960,1015 960,1040 905,945Z" fill="#000" class="ws"/>
<path d="M770,920 L790,915 795,1040 770,1050Z" fill="#000"/>
<path d="M245,810 L330,735 400,690 460,725 420,795 330,890Z" fill="#555" class="ws"/>
<path d="M430,795 L525,680 490,800 450,825Z" fill="#333" class="ws"/>
<path d="M410,670 L470,620 530,660 470,725Z" fill="#5a5a5a" class="ws"/>
<path d="M400,680 L455,725" stroke="#000" stroke-width="8"/>
<!-- gizmo -->
<path d="M635,690 L695,395" stroke="#777" stroke-width="3" fill="none"/>
<path d="M635,690 L910,435 M635,690 L985,940 M915,900 L970,940" stroke="#a83034" stroke-width="4" fill="none"/>
<!-- selection outline -->
<path d="M155,245 L255,280 350,240 372,90 400,85 470,65 500,65 505,100 525,85 535,55 580,60 600,45 640,50 645,90 665,95 675,50 700,50 725,60 770,55 790,85 810,95 820,65 860,75 900,90 925,125 960,115 1000,150 1060,150 1110,200 1130,215 1165,235 1175,265 1220,290 1250,335 1260,375 1295,395 1305,440 1325,460 1335,515 1342,600 C1335,700 1315,800 1290,880 C1240,1000 1130,1130 1000,1225 C930,1265 860,1295 790,1297 C700,1295 520,1260 380,1185 C270,1120 170,1020 90,900 C60,840 35,770 40,690 C45,620 70,560 80,500 L88,440 85,400 120,300Z" fill="none" stroke="#5ee6ea" stroke-width="8" stroke-linejoin="round"/>
<path d="M1390,295 L1435,322 M1310,820 L1440,905 M1432,950 L1290,1105 M510,1095 L790,1340 M1065,1110 L835,1340" fill="none" stroke="#d4d4d4" stroke-width="3.500"/>
</g>

<!-- command panel -->
<rect x="1622" y="144" width="298" height="696" fill="#434343"/>
<rect x="1632" y="146" width="288" height="5" fill="url(#dots)"/>
<g fill="#3a3a3a"><path d="M1629,192 L1629,163 Q1629,157 1635,157 L1666,157 Q1672,157 1672,163 L1672,192Z"/><path d="M1720,192 L1720,157 1762,157 1762,192Z"/><path d="M1765,192 L1765,157 1807,157 1807,192Z"/><path d="M1810,192 L1810,157 1852,157 1852,192Z"/><path d="M1855,192 L1855,157 1897,157 1897,192Z"/></g>
<rect x="1676" y="157" width="40" height="36" rx="4" fill="#474747"/>
<path d="M1651,164 L1651,186 M1640,175 L1662,175" stroke="#c8c8c8" stroke-width="2.500"/>
<rect x="1687" y="164" width="20" height="20" fill="none" stroke="#3cc0bd" stroke-width="1.800"/><g class="t"><rect x="1685" y="162" width="5" height="5"/><rect x="1704" y="162" width="5" height="5"/><rect x="1685" y="182" width="5" height="5"/><rect x="1704" y="182" width="5" height="5"/></g><path d="M1693,181 Q1695,170 1704,168" fill="none" stroke="#ddd" stroke-width="2"/>
<rect x="1733" y="164" width="18" height="10" fill="#999"/><path d="M1742,174 L1742,179 M1734,185 L1734,179 1750,179 1750,185" fill="none" stroke="#3cc0bd" stroke-width="1.800"/><rect x="1731" y="182" width="6" height="6" class="t"/><rect x="1747" y="182" width="6" height="6" class="t"/>
<circle cx="1783" cy="174" r="10" fill="#2f6b69"/><circle cx="1791" cy="174" r="9" fill="#a8a8a8"/>
<rect x="1820" y="165" width="24" height="15" fill="#aaa"/><path d="M1824,185 Q1832,181 1840,185Z" fill="#aaa"/>
<path d="M1866,167 Q1868,164 1871,166 L1874,171 1887,184 1884,187 1871,174 1865,172Z" fill="#888"/>
<rect x="1637" y="205" width="246" height="25" fill="#5e5e5e"/>
<text x="1644" y="223" textLength="161" lengthAdjust="spacingAndGlyphs" style="font-size:15px;fill:#c8c8c8">auxiliary flame spreader</text>
<rect x="1893" y="204" width="22" height="27" fill="#eef0f2" stroke="#111"/>
<rect x="1637" y="246" width="280" height="26" fill="#5e5e5e"/>
<text x="1641" y="265" textLength="81" lengthAdjust="spacingAndGlyphs" style="font-size:15px;fill:#c8c8c8">Modifier List</text>
<path d="M1899,257 L1907,257 1903,263Z" fill="#ddd"/>
<rect x="1638" y="282" width="278" height="165" fill="#424242" stroke="#e8e8e8" stroke-width="2"/>
<rect x="1639" y="283" width="28" height="23" fill="#333"/>
<rect x="1667" y="283" width="248" height="23" fill="#5a8ac6"/>
<path d="M1649,289 L1657,294 1649,299Z" fill="#ddd"/>
<text x="1669" y="300" textLength="85" lengthAdjust="spacingAndGlyphs" style="font-size:15px;fill:#f0f0f0">Body Object</text>
<!-- stack buttons -->
<path d="M1647,478 L1658,467 1662,471 1651,482Z M1654,466 L1660,462 1664,467 1660,472Z" fill="#ddd"/>
<line x1="1675" y1="462" x2="1675" y2="484" class="sep"/>
<rect x="1688" y="457" width="32" height="31" rx="3" fill="#5a8ac8"/><path d="M1699,463 L1709,463 1707,466 1707,480 1705,482 1702,482 1701,480 1701,466Z" fill="#d8d8d8"/><rect x="1701" y="470" width="6" height="11" class="t"/>
<line x1="1730" y1="462" x2="1730" y2="484" class="sep"/>
<circle cx="1751" cy="470" r="6" fill="#555"/><rect x="1752" y="470" width="12" height="12" fill="#555"/>
<path d="M1781,466 L1796,466 1794,483 1783,483Z M1779,463 L1798,463" fill="#555" stroke="#555" stroke-width="2"/>
<line x1="1815" y1="462" x2="1815" y2="484" class="sep"/>
<rect x="1828" y="464" width="20" height="18" fill="#ccc"/><path d="M1838,478 L1849,462" stroke="#f0a818" stroke-width="4"/><rect x="1831" y="469" width="7" height="2" fill="#333"/><rect x="1831" y="474" width="7" height="2" fill="#333"/>
<!-- divider -->
<rect x="1643" y="513" width="117" height="1" fill="#666"/><rect x="1790" y="513" width="120" height="1" fill="#666"/><rect x="1767" y="511" width="18" height="6" fill="url(#dots)"/>
<!-- rollouts -->
<g fill="#4f4f4f"><rect x="1636" y="525" width="270" height="25" rx="3"/><rect x="1636" y="556" width="270" height="24" rx="3"/><rect x="1636" y="587" width="270" height="24" rx="3"/><rect x="1636" y="617" width="270" height="219" rx="3"/></g>
<rect x="1912" y="523" width="6" height="313" rx="3" fill="#333"/><rect x="1913" y="602" width="5" height="94" rx="2" fill="#595959"/>
<g fill="#aaa"><path d="M1646,534 L1651,537 1646,541Z"/><path d="M1646,565 L1651,568 1646,572Z"/><path d="M1646,596 L1651,599 1646,603Z"/><path d="M1645,627 L1652,627 1648.500,632Z"/></g>
<g fill="url(#grip)"><rect x="1888" y="533" width="9" height="9"/><rect x="1888" y="564" width="9" height="9"/><rect x="1888" y="595" width="9" height="9"/><rect x="1888" y="626" width="9" height="9"/></g>
<text class="b" x="1663" y="543" textLength="150" lengthAdjust="spacingAndGlyphs">Object Parameters</text>
<text class="b" x="1663" y="574" textLength="170" lengthAdjust="spacingAndGlyphs">Operator Parameters</text>
<text class="b" x="1663" y="605" textLength="204" lengthAdjust="spacingAndGlyphs">Rendering Approximation</text>
<text class="b" x="1663" y="636" textLength="203" lengthAdjust="spacingAndGlyphs">Viewport Display Settings</text>
<text class="p" x="1714" y="663" textLength="104" lengthAdjust="spacingAndGlyphs">Display Options</text>
<circle cx="1674" cy="683" r="7" fill="#606060"/><circle cx="1750" cy="683" r="7" fill="#606060"/><circle cx="1821" cy="683" r="7" fill="#606060"/><circle cx="1821" cy="683" r="3.500" fill="#eee"/>
<text class="p" x="1692" y="690" textLength="47" lengthAdjust="spacingAndGlyphs">Curves</text>
<text class="p" x="1767" y="690" textLength="36" lengthAdjust="spacingAndGlyphs">Mesh</text>
<text class="p" x="1838" y="690" textLength="31" lengthAdjust="spacingAndGlyphs">Both</text>
<rect x="1662" y="708" width="218" height="45" rx="3" fill="none" stroke="#2c2c2c" stroke-width="1.500"/>
<rect x="1667" y="702" width="146" height="14" fill="#4f4f4f"/>
<text class="p" x="1669" y="714" textLength="142" lengthAdjust="spacingAndGlyphs">Mesh Quality Presets</text>
<rect x="1667" y="726" width="68" height="20" rx="3" fill="#626262"/><rect x="1742" y="726" width="71" height="20" rx="3" fill="#4f82c4"/><rect x="1819" y="726" width="56" height="20" rx="3" fill="#626262"/>
<text x="1676" y="742" textLength="48" lengthAdjust="spacingAndGlyphs" style="font-size:14.500px;fill:#bbb">Coarse</text>
<text x="1750" y="742" textLength="52" lengthAdjust="spacingAndGlyphs" style="font-size:14.500px;fill:#c8d8ee">Medium</text>
<text x="1832" y="742" textLength="29" lengthAdjust="spacingAndGlyphs" style="font-size:14.500px;fill:#bbb">Fine</text>
<path d="M1662,836 L1662,769 Q1662,766 1665,766 L1877,766 Q1880,766 1880,769 L1880,836" fill="none" stroke="#2c2c2c" stroke-width="1.500"/>
<rect x="1667" y="760" width="92" height="14" fill="#4f4f4f"/>
<text class="p" x="1669" y="772" textLength="87" lengthAdjust="spacingAndGlyphs">Mesh Display</text>
<rect x="1670" y="784" width="14" height="14" fill="#5e5e5e"/>
<text class="p" x="1687" y="797" textLength="91" lengthAdjust="spacingAndGlyphs">Weld/Smooth</text>
<text class="p" x="1665" y="821" textLength="133" lengthAdjust="spacingAndGlyphs">Face Approx Angle:</text>
<rect x="1806" y="806" width="70" height="20" fill="#5c5c5c"/><text class="p" x="1811" y="821" textLength="30" lengthAdjust="spacingAndGlyphs">15.0</text>
<path d="M1863,812 L1870,812 1866.500,808Z M1863,820 L1870,820 1866.500,824Z" fill="#ddd"/>
<rect x="1806" y="833" width="70" height="3" fill="#5c5c5c"/>

<!-- time slider -->
<rect x="52" y="850" width="3" height="70" fill="url(#dots)"/>
<rect x="63" y="848" width="19" height="23" rx="3" fill="#5a5a5a"/><rect x="86" y="848" width="172" height="23" rx="3" fill="#5a5a5a"/><rect x="262" y="848" width="19" height="23" rx="3" fill="#5a5a5a"/>
<path d="M75,854 L69,860 75,866 M268,854 L274,860 268,866" fill="none" stroke="#c8c8c8" stroke-width="1.500"/>
<text x="146" y="866" textLength="49" lengthAdjust="spacingAndGlyphs" style="font-size:15px;fill:#c0c0c0">0 / 100</text>
<!-- track -->
<rect x="61" y="878" width="1793" height="2" fill="#161616"/>
<rect x="61" y="880" width="1793" height="33" fill="#2d2d2d"/>
<rect x="139" y="880" width="1708" height="33" fill="url(#tick)"/>
<path d="M82,887 L82,900 M86,887 L86,900" stroke="#bbb" stroke-dasharray="2 1.500" stroke-width="2"/>
<path d="M91,904 L95,890 99,902 103,896" fill="none" stroke="#3cc0bd" stroke-width="1.600"/>
<rect x="134" y="881" width="12" height="32" rx="2" fill="#8f8a20"/>
<text x="140" y="911" text-anchor="middle" style="font-size:15px;fill:#e8e8c0">0</text>
<text x="226" y="911" text-anchor="middle" style="font-size:15px;fill:#bbb">5</text>
<text x="311" y="911" text-anchor="middle" style="font-size:15px;fill:#bbb">10</text>
<text x="397" y="911" text-anchor="middle" style="font-size:15px;fill:#bbb">15</text>
<text x="481" y="911" text-anchor="middle" style="font-size:15px;fill:#bbb">20</text>
<text x="567" y="911" text-anchor="middle" style="font-size:15px;fill:#bbb">25</text>
<text x="652" y="911" text-anchor="middle" style="font-size:15px;fill:#bbb">30</text>
<text x="737" y="911" text-anchor="middle" style="font-size:15px;fill:#bbb">35</text>
<text x="822" y="911" text-anchor="middle" style="font-size:15px;fill:#bbb">40</text>
<text x="907" y="911" text-anchor="middle" style="font-size:15px;fill:#bbb">45</text>
<text x="993" y="911" text-anchor="middle" style="font-size:15px;fill:#bbb">50</text>
<text x="1078" y="911" text-anchor="middle" style="font-size:15px;fill:#bbb">55</text>
<text x="1163" y="911" text-anchor="middle" style="font-size:15px;fill:#bbb">60</text>
<text x="1248" y="911" text-anchor="middle" style="font-size:15px;fill:#bbb">65</text>
<text x="1334" y="911" text-anchor="middle" style="font-size:15px;fill:#bbb">70</text>
<text x="1419" y="911" text-anchor="middle" style="font-size:15px;fill:#bbb">75</text>
<text x="1504" y="911" text-anchor="middle" style="font-size:15px;fill:#bbb">80</text>
<text x="1589" y="911" text-anchor="middle" style="font-size:15px;fill:#bbb">85</text>
<text x="1675" y="911" text-anchor="middle" style="font-size:15px;fill:#bbb">90</text>
<text x="1760" y="911" text-anchor="middle" style="font-size:15px;fill:#bbb">95</text>
<text x="1846" y="911" text-anchor="middle" style="font-size:15px;fill:#bbb">100</text>

<!-- status -->
<rect x="6" y="922" width="139" height="65" fill="#888"/>
<rect x="8" y="925" width="135" height="26" fill="#dcc4c4"/>
<rect x="8" y="956" width="135" height="29" fill="#fff"/>
<text x="14" y="973" textLength="126" lengthAdjust="spacingAndGlyphs" style="font-family:'Liberation Mono',monospace;font-size:15px;fill:#888">MAXScript Mi:</text>
<rect x="150" y="922" width="2" height="65" fill="#1e1e1e"/>
<text x="160" y="945" textLength="117" lengthAdjust="spacingAndGlyphs">1 Object Selected</text>
<text x="157" y="981" textLength="263" lengthAdjust="spacingAndGlyphs">Click or click-and-drag to select objects</text>
<!-- isolate, lock -->
<path d="M665,931 L665,927 670,927 M680,927 L685,927 685,931 M665,945 L665,949 670,949 M685,945 L685,949 680,949" fill="none" stroke="#ddd" stroke-width="1.800"/><rect x="670" y="932" width="10" height="12" class="t"/>
<path d="M707,934 L707,930 A5,5 0 0 1 717,930 L717,934" fill="none" stroke="#ddd" stroke-width="2"/><rect x="704" y="934" width="16" height="14" fill="#ddd"/><rect x="711" y="938" width="2" height="6" fill="#333"/>
<rect x="740" y="927" width="20" height="22" fill="#d8d8d8"/><path d="M750,930 L757,938 750,946 743,938Z" fill="#333"/><circle cx="750" cy="938" r="3.500" fill="#ddd"/>
<text class="b" x="772" y="945" style="font-size:14px;fill:#ddd" textLength="13" lengthAdjust="spacingAndGlyphs">X:</text>
<rect x="791" y="927" width="80" height="24" fill="#5a5a5a"/><text x="795" y="945" textLength="72" lengthAdjust="spacingAndGlyphs" style="font-size:14.500px;fill:#808080">33.922mm</text>
<text class="b" x="890" y="945" style="font-size:14px;fill:#ddd" textLength="13" lengthAdjust="spacingAndGlyphs">Y:</text>
<rect x="909" y="927" width="80" height="24" fill="#5a5a5a"/><text x="913" y="945" textLength="76" lengthAdjust="spacingAndGlyphs" style="font-size:14.500px;fill:#808080">-30.465mm</text>
<text class="b" x="1008" y="945" style="font-size:14px;fill:#ddd" textLength="13" lengthAdjust="spacingAndGlyphs">Z:</text>
<rect x="1027" y="927" width="81" height="24" fill="#5a5a5a"/><text x="1031" y="945" textLength="45" lengthAdjust="spacingAndGlyphs" style="font-size:14.500px;fill:#808080">0.0mm</text>
<text x="1130" y="945" textLength="99" lengthAdjust="spacingAndGlyphs" style="font-size:15px">Grid = 10.0mm</text>
<!-- add time tag -->
<rect x="1091" y="960" width="2" height="25" fill="#222"/><rect x="1094" y="960" width="30" height="26" rx="3" fill="#5a8ac8"/><path d="M1109,964 L1118,969 1118,978 1109,983 1100,978 1100,969Z M1100,969 L1109,974 1118,969 M1109,974 L1109,983" fill="none" stroke="#e0e0e0" stroke-width="1.500"/>
<text x="1130" y="981" textLength="91" lengthAdjust="spacingAndGlyphs" style="font-size:15px">Add Time Tag</text>
<!-- anim -->
<g class="w"><rect x="1290" y="931" width="2" height="14"/><path d="M1301,931 L1294,938 1301,945Z M1309,931 L1302,938 1309,945Z"/><rect x="1318" y="927" width="2" height="24" fill="#111"/>
<path d="M1334,930 L1326,938 1334,946Z"/><rect x="1336" y="930" width="3" height="16"/><rect x="1341" y="930" width="3" height="16"/>
<path d="M1358,926 L1377,939 1358,952Z"/><rect x="1390" y="930" width="3" height="16"/><rect x="1395" y="930" width="3" height="16"/><path d="M1400,930 L1408,938 1400,946Z"/>
<rect x="1420" y="927" width="2" height="24" fill="#111"/><path d="M1426,931 L1433,938 1426,945Z M1434,931 L1441,938 1434,945Z"/><rect x="1443" y="931" width="2" height="14"/>
<path d="M1297,964 L1291,970 1297,976Z M1301,964 L1307,970 1301,976Z"/></g>
<path d="M1379,948 L1384,948 1384,943Z" fill="#ddd"/>
<rect x="1318" y="958" width="2" height="24" fill="#111"/><rect x="1321" y="958" width="97" height="23" fill="#5c5c5c"/><rect x="1420" y="958" width="2" height="24" fill="#111"/>
<text x="1326" y="976" style="font-size:15px;fill:#bbb">0</text><path d="M1407,967 L1413,967 1410,963Z M1407,973 L1413,973 1410,977Z" fill="#ddd"/>
<circle cx="1436" cy="965" r="7" fill="#d8d8d8"/><path d="M1436,960 L1436,965 1440,966" stroke="#333" fill="none" stroke-width="1.500"/><circle cx="1443" cy="975" r="5" fill="none" stroke="#f0a818" stroke-width="3"/>
<!-- key -->
<rect x="1470" y="924" width="60" height="59" rx="4" fill="#5a5a5a"/>
<path d="M1495,935 L1505,935 1505,949 1519,949 1519,959 1505,959 1505,973 1495,973 1495,959 1481,959 1481,949 1495,949Z" fill="#e0e0e0"/>
<circle cx="1503" cy="971" r="4.500" fill="none" stroke="#3cc0bd" stroke-width="3"/><path d="M1506,967 L1518,955 M1514,955 L1518,960" stroke="#3cc0bd" stroke-width="3"/>
<rect x="1536" y="925" width="64" height="27" rx="3" fill="#5a5a5a"/><rect x="1536" y="956" width="64" height="27" rx="3" fill="#5a5a5a"/>
<text x="1537" y="945" textLength="62" lengthAdjust="spacingAndGlyphs" style="fill:#c0c0c0">Auto Key</text>
<text x="1541" y="976" textLength="54" lengthAdjust="spacingAndGlyphs" style="fill:#c0c0c0">Set Key</text>
<rect x="1607" y="925" width="161" height="27" fill="#5a5a5a"/><text x="1615" y="943" textLength="58" lengthAdjust="spacingAndGlyphs" style="fill:#c8c8c8">Selected</text><path d="M1749,936 L1757,936 1753,942Z" fill="#ddd"/>
<path d="M1613,982 Q1613,966 1618,960 M1630,982 Q1630,966 1625,960" fill="none" stroke="#3cc0bd" stroke-width="2.500"/><rect x="1619" y="955" width="4" height="4" fill="#ddd"/><rect x="1612" y="957" width="3" height="3" fill="#ddd"/><rect x="1628" y="957" width="3" height="3" fill="#ddd"/>
<path d="M1633,984 L1638,984 1638,979Z" fill="#ddd"/>
<rect x="1645" y="957" width="123" height="28" rx="3" fill="#5a5a5a"/><text x="1661" y="977" textLength="88" lengthAdjust="spacingAndGlyphs" style="fill:#c8c8c8">Key Filters...</text>
<!-- viewport nav -->
<rect x="1788" y="933" width="7" height="7" class="t"/><path d="M1800,927 L1800,952 M1796,931 L1800,927 1804,931 M1796,948 L1800,952 1804,948" fill="none" stroke="#ddd" stroke-width="2"/><path d="M1806,955 L1811,955 1811,950Z" fill="#ddd"/>
<path d="M1822,932 L1830,926 1838,932 1838,938 1822,938Z" fill="#ccc"/><rect x="1824" y="938" width="14" height="10" fill="#f0b020"/><rect x="1840" y="940" width="4" height="7" fill="#f0b020"/>
<path d="M1858,930 Q1850,930 1850,940 L1854,948 M1866,930 Q1872,932 1870,938" fill="none" stroke="#ddd" stroke-width="3"/><rect x="1858" y="940" width="12" height="10" fill="#f0b020"/>
<path d="M1892,927 L1898,931 1898,945 1892,948 1889,945 1889,931Z" class="t"/><g class="w"><rect x="1880" y="938" width="5" height="5" transform="rotate(45 1882 940)"/><rect x="1886" y="943" width="5" height="5" transform="rotate(45 1888 945)"/></g><path d="M1903,955 L1908,955 1908,950Z" fill="#ddd"/>
<path d="M1791,958 L1803,970 1791,982" fill="none" stroke="#ddd" stroke-width="2.500"/><circle cx="1798" cy="970" r="1.500" fill="#ddd"/>
<rect x="1830" y="958" width="10" height="10" fill="#ddd"/><rect x="1843" y="958" width="3" height="3" fill="#ddd"/><path d="M1828,972 L1842,972 1846,984 1824,984Z" class="t"/><path d="M1848,984 L1853,984 1853,979Z" fill="#ddd"/>
<ellipse cx="1858" cy="966" rx="8" ry="9" fill="#bbb"/><path d="M1852,974 L1868,958" stroke="#ddd" stroke-width="2"/><rect x="1858" y="972" width="11" height="10" fill="#f0b020"/><rect x="1871" y="973" width="3" height="7" fill="#f0b020"/><path d="M1872,984 L1877,984 1877,979Z" fill="#ddd"/>
<rect x="1884" y="957" width="21" height="26" fill="#ddd"/><rect x="1887" y="970" width="10" height="10" fill="#333"/><path d="M1892,970 L1902,960 M1896,960 L1902,960 1902,966" fill="none" stroke="#222" stroke-width="2"/>
</svg>
</body></html>
